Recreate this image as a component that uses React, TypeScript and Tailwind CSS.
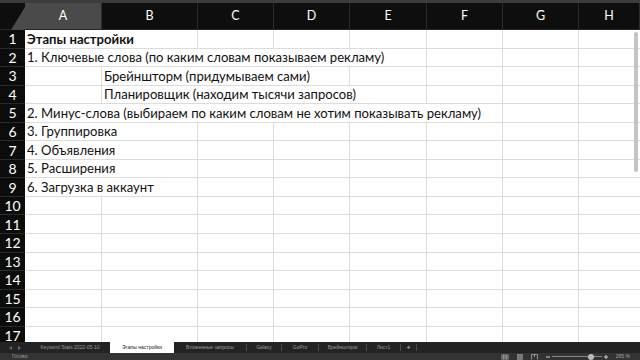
import React from "react";

const COLS = [
  { l: "A", w: 77 },
  { l: "B", w: 96 },
  { l: "C", w: 76 },
  { l: "D", w: 76 },
  { l: "E", w: 77 },
  { l: "F", w: 76 },
  { l: "G", w: 76 },
  { l: "H", w: 61 },
];

type Span = { start: number; end: number; text: string; bold?: boolean };

const ROWS: Record<number, Span> = {
  1: { start: 0, end: 1, text: "Этапы настройки", bold: true },
  2: { start: 0, end: 4, text: "1. Ключевые слова (по каким словам показываем рекламу)" },
  3: { start: 1, end: 3, text: "Брейншторм (придумываем сами)" },
  4: { start: 1, end: 4, text: "Планировщик (находим тысячи запросов)" },
  5: { start: 0, end: 5, text: "2. Минус-слова (выбираем по каким словам не хотим показывать рекламу)" },
  6: { start: 0, end: 1, text: "3. Группировка" },
  7: { start: 0, end: 1, text: "4. Объявления" },
  8: { start: 0, end: 1, text: "5. Расширения" },
  9: { start: 0, end: 1, text: "6. Загрузка в аккаунт" },
};

const cellFont = { fontFamily: "Lato, 'Noto Sans', sans-serif" };

function Row({ n }: { n: number }) {
  const span = ROWS[n];
  const cells: React.ReactNode[] = [];
  let i = 0;
  while (i < COLS.length) {
    if (span && i === span.start) {
      let w = 0;
      for (let k = span.start; k <= span.end; k++) w += COLS[k].w;
      cells.push(
        <div
          key={i}
          className={`shrink-0 h-full border-r border-b border-[#dcdcdc] flex items-end pl-[2px] pb-[1px] whitespace-nowrap text-[13.1px] leading-[16px] text-[#111] ${span.bold ? "font-bold" : ""}`}
          style={{ width: w, ...cellFont }}
        >
          {span.text}
        </div>
      );
      i = span.end + 1;
    } else {
      cells.push(
        <div
          key={i}
          className={`shrink-0 h-full border-b border-[#dcdcdc] ${i === COLS.length - 1 ? "" : "border-r"}`}
          style={{ width: COLS[i].w }}
        />
      );
      i++;
    }
  }
  return (
    <div className="flex h-[18.56px] shrink-0">
      <div
        className="w-[25px] shrink-0 h-full bg-[#0c0c0c] border-b border-[#2a2a2a] text-white text-[14px] flex items-center justify-center"
        style={cellFont}
      >
        {n}
      </div>
      {cells}
    </div>
  );
}

const tabFont = { fontFamily: "'Liberation Sans', Arial, sans-serif" };

export default function App() {
  const rows = Array.from({ length: 18 }, (_, i) => i + 1);
  return (
    <div className="w-[640px] h-[360px] overflow-hidden bg-white flex flex-col">
      {/* top strip */}
      <div className="h-[3px] bg-[#3c3c3c] shrink-0" />
      {/* column headers */}
      <div className="h-[27px] shrink-0 flex bg-[#0e0e0e] border-b border-[#262626]">
        <div className="w-[25px] shrink-0 relative">
          <svg width="25" height="27" className="absolute left-0 top-0">
            <polygon points="25,4 25,27 11,27" fill="#4a4a4a" />
          </svg>
        </div>
        {COLS.map((c, idx) => (
          <div
            key={c.l}
            className={`shrink-0 flex items-center justify-center text-[12.5px] text-white border-r border-[#2c2c2c] ${idx === 0 ? "bg-[#4a4a4a]" : ""}`}
            style={{ width: c.w, ...cellFont }}
          >
            {c.l}
          </div>
        ))}
      </div>
      {/* grid */}
      <div className="flex-1 overflow-hidden relative">
        {rows.map((n) => (
          <Row key={n} n={n} />
        ))}
        <div className="absolute right-[2px] top-[2px] w-[4px] h-[140px] rounded-full bg-[#c4c4c4]" />
      </div>
      {/* tab bar */}
      <div className="h-[11px] shrink-0 bg-[#232323] flex items-stretch text-[5px] leading-none text-[#9a9a9a]" style={tabFont}>
        <div className="w-[30px] flex items-center justify-center gap-[6px]">
          <svg width="3" height="4" viewBox="0 0 3 4"><polygon points="3,0 3,4 0,2" fill="#6a6a6a" /></svg>
          <svg width="3" height="4" viewBox="0 0 3 4"><polygon points="0,0 0,4 3,2" fill="#6a6a6a" /></svg>
        </div>
        <div className="w-[80px] flex items-center justify-center">Keyword Stats 2022-05-10</div>
        <div className="w-[64px] flex items-center justify-center bg-white text-[#222]">Этапы настройки</div>
        <div className="w-[73px] flex items-center justify-center border-r border-[#4a4a4a] my-[2px]">Вложенные запросы</div>
        <div className="w-[35px] flex items-center justify-center border-r border-[#4a4a4a] my-[2px]">Galaxy</div>
        <div className="w-[37px] flex items-center justify-center border-r border-[#4a4a4a] my-[2px]">GoPro</div>
        <div className="w-[48px] flex items-center justify-center border-r border-[#4a4a4a] my-[2px]">Брейншторм</div>
        <div className="w-[34px] flex items-center justify-center border-r border-[#4a4a4a] my-[2px]">Лист1</div>
        <div className="w-[16px] flex items-center justify-center border-r border-[#4a4a4a] my-[2px] text-[8px] text-[#bbb]">+</div>
      </div>
      {/* status bar */}
      <div className="h-[7px] shrink-0 bg-[#333333] flex items-center text-[5px] leading-none text-[#9a9a9a]" style={tabFont}>
        <span className="ml-[12px]">Готово</span>
        <div className="ml-auto flex items-center gap-[8px] mr-[10px]">
          <svg width="8" height="6" viewBox="0 0 8 6">
            <rect x="0" y="0" width="8" height="6" fill="#555" />
            <path d="M0 2h8M0 4h8M2.7 0v6M5.3 0v6" stroke="#aaa" strokeWidth="0.6" />
          </svg>
          <svg width="6" height="6" viewBox="0 0 6 6">
            <rect x="0.5" y="0.5" width="5" height="5" fill="#777" stroke="#999" strokeWidth="0.6" />
          </svg>
          <svg width="7" height="6" viewBox="0 0 7 6">
            <path d="M0.5 5.5V0.5H6.5V5.5M3.5 0.5V3" stroke="#aaa" strokeWidth="0.8" fill="none" />
          </svg>
          <div className="flex items-center gap-[2px]">
            <svg width="4" height="4" viewBox="0 0 4 4"><path d="M0 2h4" stroke="#ccc" strokeWidth="1" /></svg>
            <div className="w-[50px] h-[1px] bg-[#888] relative">
              <div className="absolute left-[36px] top-[-2.5px] w-[6px] h-[6px] rounded-full bg-[#bbb]" />
            </div>
            <svg width="4" height="4" viewBox="0 0 4 4"><path d="M0 2h4M2 0v4" stroke="#ccc" strokeWidth="1" /></svg>
          </div>
          <span className="text-[#aaa]">265 %</span>
        </div>
      </div>
    </div>
  );
}
